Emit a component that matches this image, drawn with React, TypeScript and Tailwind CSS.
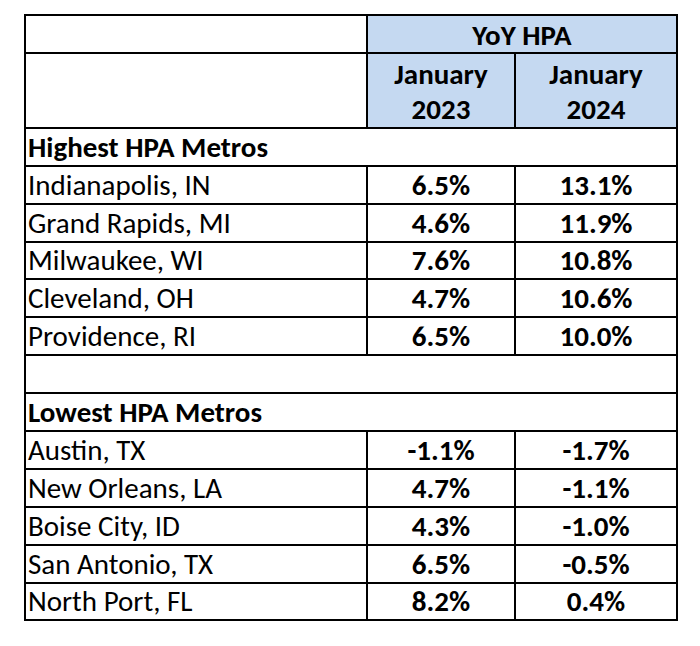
import React from "react";

const high = [
  ["Indianapolis, IN", "6.5%", "13.1%"],
  ["Grand Rapids, MI", "4.6%", "11.9%"],
  ["Milwaukee, WI", "7.6%", "10.8%"],
  ["Cleveland, OH", "4.7%", "10.6%"],
  ["Providence, RI", "6.5%", "10.0%"],
];
const low = [
  ["Austin, TX", "-1.1%", "-1.7%"],
  ["New Orleans, LA", "4.7%", "-1.1%"],
  ["Boise City, ID", "4.3%", "-1.0%"],
  ["San Antonio, TX", "6.5%", "-0.5%"],
  ["North Port, FL", "8.2%", "0.4%"],
];

const cell = "border-2 border-black p-0";

function DataRow({ r }: { r: string[] }) {
  return (
    <tr className="h-[37.8px]">
      <td className={`${cell} leading-none pl-[2px] align-bottom pb-[3px] text-left`}>{r[0]}</td>
      <td className={`${cell} leading-none align-bottom pb-[3px] text-center font-bold`}>{r[1]}</td>
      <td className={`${cell} leading-none align-bottom pb-[3px] text-center font-bold`}>{r[2]}</td>
    </tr>
  );
}

export default function App() {
  return (
    <div className="w-[700px] h-[646px] bg-white pt-[14px] pl-[24px]" style={{ fontFamily: "Carlito, Calibri, Lato, 'Open Sans', sans-serif" }}>
      <table className="border-collapse border-2 border-black text-[29px] text-black table-fixed w-[652px]">
        <colgroup>
          <col className="w-[342px]" />
          <col className="w-[148px]" />
          <col className="w-[162px]" />
        </colgroup>
        <tbody>
          <tr className="h-[38px]">
            <td className={cell}></td>
            <td colSpan={2} className={`${cell} leading-none bg-[#c5d9f1] text-center font-bold align-bottom pb-[2px]`}>YoY HPA</td>
          </tr>
          <tr className="h-[75px]">
            <td className={cell}></td>
            <td className={`${cell} bg-[#c5d9f1] text-center font-bold align-bottom pb-0 leading-[35px]`}>January<br />2023</td>
            <td className={`${cell} bg-[#c5d9f1] text-center font-bold align-bottom pb-0 leading-[35px]`}>January<br />2024</td>
          </tr>
          <tr className="h-[38px]">
            <td colSpan={3} className={`${cell} leading-none pl-[2px] font-bold align-bottom pb-[3px] text-left`}>Highest HPA Metros</td>
          </tr>
          {high.map((r) => <DataRow key={r[0]} r={r} />)}
          <tr className="h-[38.5px]">
            <td colSpan={3} className={cell}></td>
          </tr>
          <tr className="h-[38px]">
            <td colSpan={3} className={`${cell} leading-none pl-[2px] font-bold align-bottom pb-[3px] text-left`}>Lowest HPA Metros</td>
          </tr>
          {low.map((r) => <DataRow key={r[0]} r={r} />)}
        </tbody>
      </table>
    </div>
  );
}
